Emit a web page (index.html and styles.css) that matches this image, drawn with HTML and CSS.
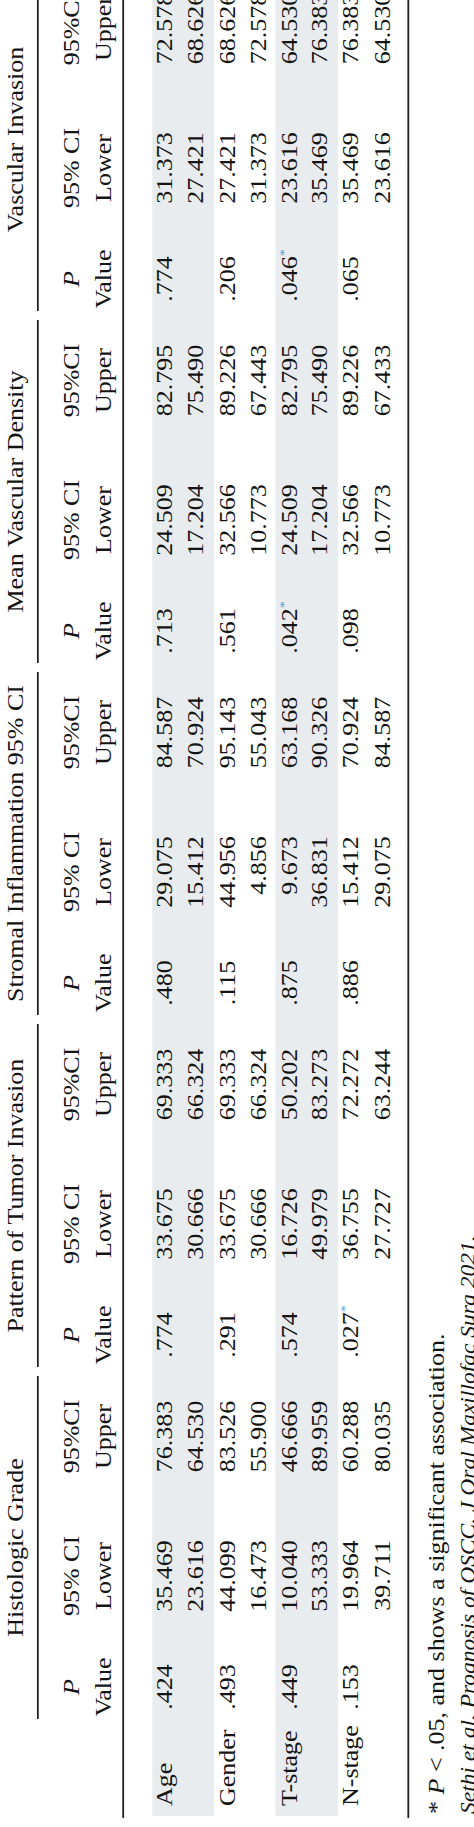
FILE: index.html
```html
<!DOCTYPE html>
<html lang="en">
<head>
<meta charset="utf-8">
<title>Table</title>
<link rel="stylesheet" href="styles.css">
</head>
<body>
<div class="frame">
  <div class="sheet">
    <div class="groups">
      <div class="stub"></div>
      <div class="grp">Histologic Grade</div>
      <div class="grp">Pattern of Tumor Invasion</div>
      <div class="grp">Stromal Inflammation 95% CI</div>
      <div class="grp">Mean Vascular Density</div>
      <div class="grp">Vascular Invasion</div>
    </div>
    <div class="line subs">
      <div class="stub"></div>
      <div class="blk"><div class="c"><i class="p">P</i><br>Value</div><div class="c">95% CI<br>Lower</div><div class="c">95%CI<br>Upper</div></div>
      <div class="blk"><div class="c"><i class="p">P</i><br>Value</div><div class="c">95% CI<br>Lower</div><div class="c">95%CI<br>Upper</div></div>
      <div class="blk"><div class="c"><i class="p">P</i><br>Value</div><div class="c">95% CI<br>Lower</div><div class="c">95%CI<br>Upper</div></div>
      <div class="blk"><div class="c"><i class="p">P</i><br>Value</div><div class="c">95% CI<br>Lower</div><div class="c">95%CI<br>Upper</div></div>
      <div class="blk"><div class="c"><i class="p">P</i><br>Value</div><div class="c">95% CI<br>Lower</div><div class="c">95%CI<br>Upper</div></div>
    </div>
    <div class="rule top"></div>
    <div class="body">
      <div class="line row shade">
        <div class="stub lbl">Age</div>
        <div class="blk"><div class="c">.424</div><div class="c"><span class="n">35.469</span><br><span class="n">23.616</span></div><div class="c"><span class="n">76.383</span><br><span class="n">64.530</span></div></div>
        <div class="blk"><div class="c">.774</div><div class="c"><span class="n">33.675</span><br><span class="n">30.666</span></div><div class="c"><span class="n">69.333</span><br><span class="n">66.324</span></div></div>
        <div class="blk"><div class="c">.480</div><div class="c"><span class="n">29.075</span><br><span class="n">15.412</span></div><div class="c"><span class="n">84.587</span><br><span class="n">70.924</span></div></div>
        <div class="blk"><div class="c">.713</div><div class="c"><span class="n">24.509</span><br><span class="n">17.204</span></div><div class="c"><span class="n">82.795</span><br><span class="n">75.490</span></div></div>
        <div class="blk"><div class="c">.774</div><div class="c"><span class="n">31.373</span><br><span class="n">27.421</span></div><div class="c"><span class="n">72.578</span><br><span class="n">68.626</span></div></div>
      </div>
      <div class="line row">
        <div class="stub lbl">Gender</div>
        <div class="blk"><div class="c">.493</div><div class="c"><span class="n">44.099</span><br><span class="n">16.473</span></div><div class="c"><span class="n">83.526</span><br><span class="n">55.900</span></div></div>
        <div class="blk"><div class="c">.291</div><div class="c"><span class="n">33.675</span><br><span class="n">30.666</span></div><div class="c"><span class="n">69.333</span><br><span class="n">66.324</span></div></div>
        <div class="blk"><div class="c">.115</div><div class="c"><span class="n">44.956</span><br><span class="n">4.856</span></div><div class="c"><span class="n">95.143</span><br><span class="n">55.043</span></div></div>
        <div class="blk"><div class="c">.561</div><div class="c"><span class="n">32.566</span><br><span class="n">10.773</span></div><div class="c"><span class="n">89.226</span><br><span class="n">67.443</span></div></div>
        <div class="blk"><div class="c">.206</div><div class="c"><span class="n">27.421</span><br><span class="n">31.373</span></div><div class="c"><span class="n">68.626</span><br><span class="n">72.578</span></div></div>
      </div>
      <div class="line row shade">
        <div class="stub lbl">T-stage</div>
        <div class="blk"><div class="c">.449</div><div class="c"><span class="n">10.040</span><br><span class="n">53.333</span></div><div class="c"><span class="n">46.666</span><br><span class="n">89.959</span></div></div>
        <div class="blk"><div class="c">.574</div><div class="c"><span class="n">16.726</span><br><span class="n">49.979</span></div><div class="c"><span class="n">50.202</span><br><span class="n">83.273</span></div></div>
        <div class="blk"><div class="c">.875</div><div class="c"><span class="n">9.673</span><br><span class="n">36.831</span></div><div class="c"><span class="n">63.168</span><br><span class="n">90.326</span></div></div>
        <div class="blk"><div class="c">.042<span class="sig">*</span></div><div class="c"><span class="n">24.509</span><br><span class="n">17.204</span></div><div class="c"><span class="n">82.795</span><br><span class="n">75.490</span></div></div>
        <div class="blk"><div class="c">.046<span class="sig">*</span></div><div class="c"><span class="n">23.616</span><br><span class="n">35.469</span></div><div class="c"><span class="n">64.530</span><br><span class="n">76.383</span></div></div>
      </div>
      <div class="line row">
        <div class="stub lbl">N-stage</div>
        <div class="blk"><div class="c">.153</div><div class="c"><span class="n">19.964</span><br><span class="n">39.711</span></div><div class="c"><span class="n">60.288</span><br><span class="n">80.035</span></div></div>
        <div class="blk"><div class="c">.027<span class="sig">*</span></div><div class="c"><span class="n">36.755</span><br><span class="n">27.727</span></div><div class="c"><span class="n">72.272</span><br><span class="n">63.244</span></div></div>
        <div class="blk"><div class="c">.886</div><div class="c"><span class="n">15.412</span><br><span class="n">29.075</span></div><div class="c"><span class="n">70.924</span><br><span class="n">84.587</span></div></div>
        <div class="blk"><div class="c">.098</div><div class="c"><span class="n">32.566</span><br><span class="n">10.773</span></div><div class="c"><span class="n">89.226</span><br><span class="n">67.433</span></div></div>
        <div class="blk"><div class="c">.065</div><div class="c"><span class="n">35.469</span><br><span class="n">23.616</span></div><div class="c"><span class="n">76.383</span><br><span class="n">64.530</span></div></div>
      </div>
    </div>
    <div class="rule bottom"></div>
    <p class="note">* <i>P</i> &lt; .05, and shows a significant association.</p>
    <p class="src">Sethi et al. Prognosis of OSCC. J Oral Maxillofac Surg 2021.</p>
  </div>
</div>
</body>
</html>
```

FILE: styles.css
```css
html, body {
  margin: 0;
  padding: 0;
  background: #ffffff;
}

.frame {
  width: 474px;
  height: 1827px;
  overflow: hidden;
  background: #ffffff;
}

/* The table is laid out upright, then turned a quarter turn
   counter-clockwise and slightly compressed across its lines. */
.sheet {
  width: 1860px;
  height: 539px;
  transform-origin: 0 0;
  transform: translateY(1827px) rotate(-90deg) scaleY(0.88);
  font-family: "Liberation Serif", "Times New Roman", serif;
  font-size: 26px;
  line-height: 35.2px;
  color: #141414;
}

.groups {
  display: flex;
  gap: 9px;
  margin-top: -9.3px;
}

.stub {
  width: 90px;
  flex: none;
}

.grp {
  width: 343px;
  flex: none;
  text-align: center;
  white-space: nowrap;
  padding-bottom: 6.5px;
  border-bottom: 2.3px solid #1e1e1e;
}

.line {
  display: flex;
  gap: 9px;
}

.subs {
  margin-top: 20.7px;
}

.blk {
  width: 343px;
  flex: none;
  display: grid;
  grid-template-columns: 64px 158px 121px;
}

.c {
  text-align: center;
  white-space: nowrap;
}

.p {
  font-style: italic;
}

.rule {
  height: 2.3px;
  background: #1e1e1e;
}

.rule.top {
  margin-top: 4.3px;
}

.body {
  margin-top: 31.2px;
  padding-left: 2px;
}

.row {
  height: 70.45px;
}

.row .stub {
  width: 88px;
}

.row > * {
  margin-top: -2.5px;
}

.shade {
  background: #e9ecee;
}

.lbl {
  padding-left: 10px;
  box-sizing: border-box;
  white-space: nowrap;
}

.n {
  display: inline-block;
  min-width: 2.75em;
  text-align: right;
}

.sig {
  display: inline-block;
  width: 0;
  font-size: 14px;
  line-height: 14px;
  vertical-align: 10px;
  color: #4a9fd8;
}

.rule.bottom {
  margin-top: 8.6px;
}

.note {
  margin: 13.9px 0 0 0;
  padding-left: 4px;
  white-space: nowrap;
}

.note i {
  font-style: italic;
}

.src {
  margin: 1px 0 0 0;
  padding-left: 4px;
  font-size: 23.5px;
  font-style: italic;
  white-space: nowrap;
}
```
